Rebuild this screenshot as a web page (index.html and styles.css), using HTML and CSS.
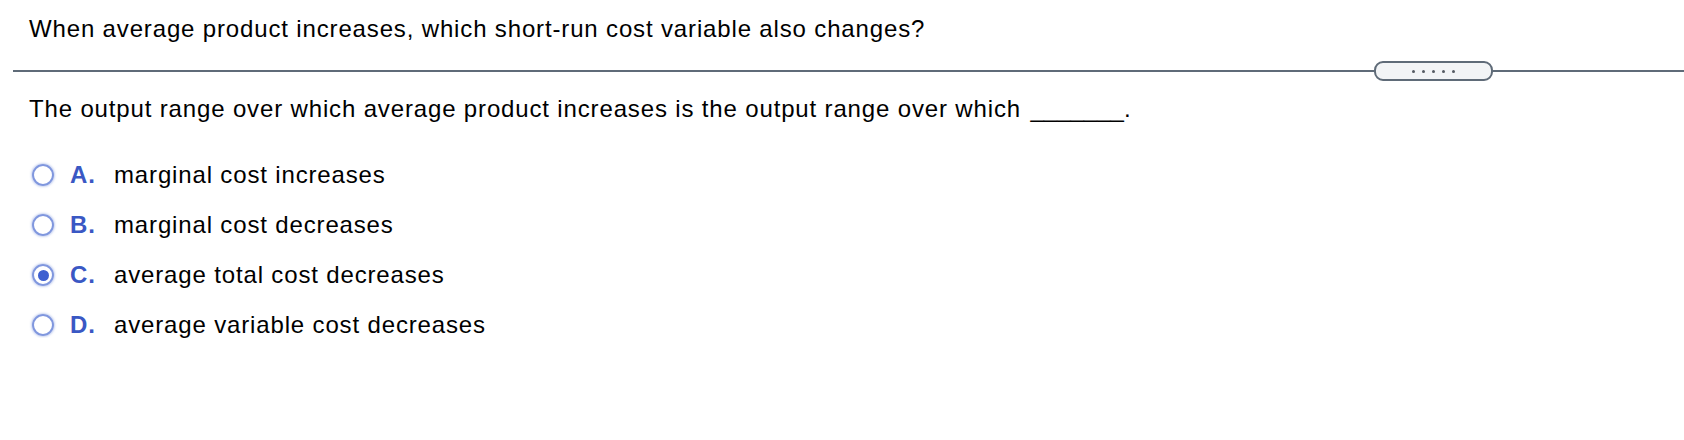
FILE: index.html
```html
<!DOCTYPE html>
<html>
<head>
<meta charset="utf-8">
<link rel="stylesheet" href="styles.css">
</head>
<body>
<div class="page">
  <div class="question">When average product increases, which short-run cost variable also changes?</div>
  <div class="divider">
    <div class="rule rule-left"></div>
    <div class="more"><span></span><span></span><span></span><span></span><span></span></div>
    <div class="rule rule-right"></div>
  </div>
  <div class="prompt">The output range over which average product increases is the output range over which <span class="blank">_______</span>.</div>
  <ul class="options">
    <li class="option"><span class="radio"></span><span class="letter">A.</span><span class="text">marginal cost increases</span></li>
    <li class="option"><span class="radio"></span><span class="letter">B.</span><span class="text">marginal cost decreases</span></li>
    <li class="option"><span class="radio checked"></span><span class="letter">C.</span><span class="text">average total cost decreases</span></li>
    <li class="option"><span class="radio"></span><span class="letter">D.</span><span class="text">average variable cost decreases</span></li>
  </ul>
</div>
</body>
</html>
```
FILE: styles.css
```css
html, body {
  margin: 0;
  padding: 0;
  background: #ffffff;
}
.page {
  font-family: "Liberation Sans", Arial, sans-serif;
  color: #000;
  font-size: 24px;
  letter-spacing: 0.85px;
}
.question {
  padding: 16px 0 0 29px;
  line-height: 26px;
}
.divider {
  display: flex;
  align-items: center;
  margin-top: 19px;
  padding-left: 13px;
}
.rule {
  height: 2px;
  background: #5f6b78;
}
.rule-left {
  width: 1361px;
}
.rule-right {
  flex: 1;
}
.more {
  box-sizing: border-box;
  width: 119px;
  height: 20px;
  border: 2px solid #5f6b78;
  border-radius: 9px;
  background: #f2f4f6;
  display: flex;
  justify-content: center;
  align-items: center;
  gap: 7px;
}
.more span {
  width: 3px;
  height: 3px;
  border-radius: 50%;
  background: #555b63;
}
.prompt {
  padding: 15px 0 0 29px;
  line-height: 26px;
}
.blank {
  letter-spacing: 0;
  margin-left: 2px;
}
.options {
  list-style: none;
  margin: 40px 0 0 0;
  padding: 0 0 0 32px;
  display: flex;
  flex-direction: column;
  gap: 24px;
}
.option {
  display: flex;
  align-items: center;
  height: 26px;
}
.radio {
  box-sizing: border-box;
  width: 22px;
  height: 22px;
  border-radius: 50%;
  border: 2px solid #8097de;
  box-shadow: 0 0 2px 1px rgba(150, 170, 230, 0.5);
  display: flex;
  align-items: center;
  justify-content: center;
}
.radio.checked::after {
  content: "";
  width: 11px;
  height: 11px;
  border-radius: 50%;
  background: #3d5fd0;
}
.letter {
  color: #3a58c4;
  font-weight: bold;
  margin-left: 16px;
  width: 44px;
}
.text {
  color: #000;
}
```
